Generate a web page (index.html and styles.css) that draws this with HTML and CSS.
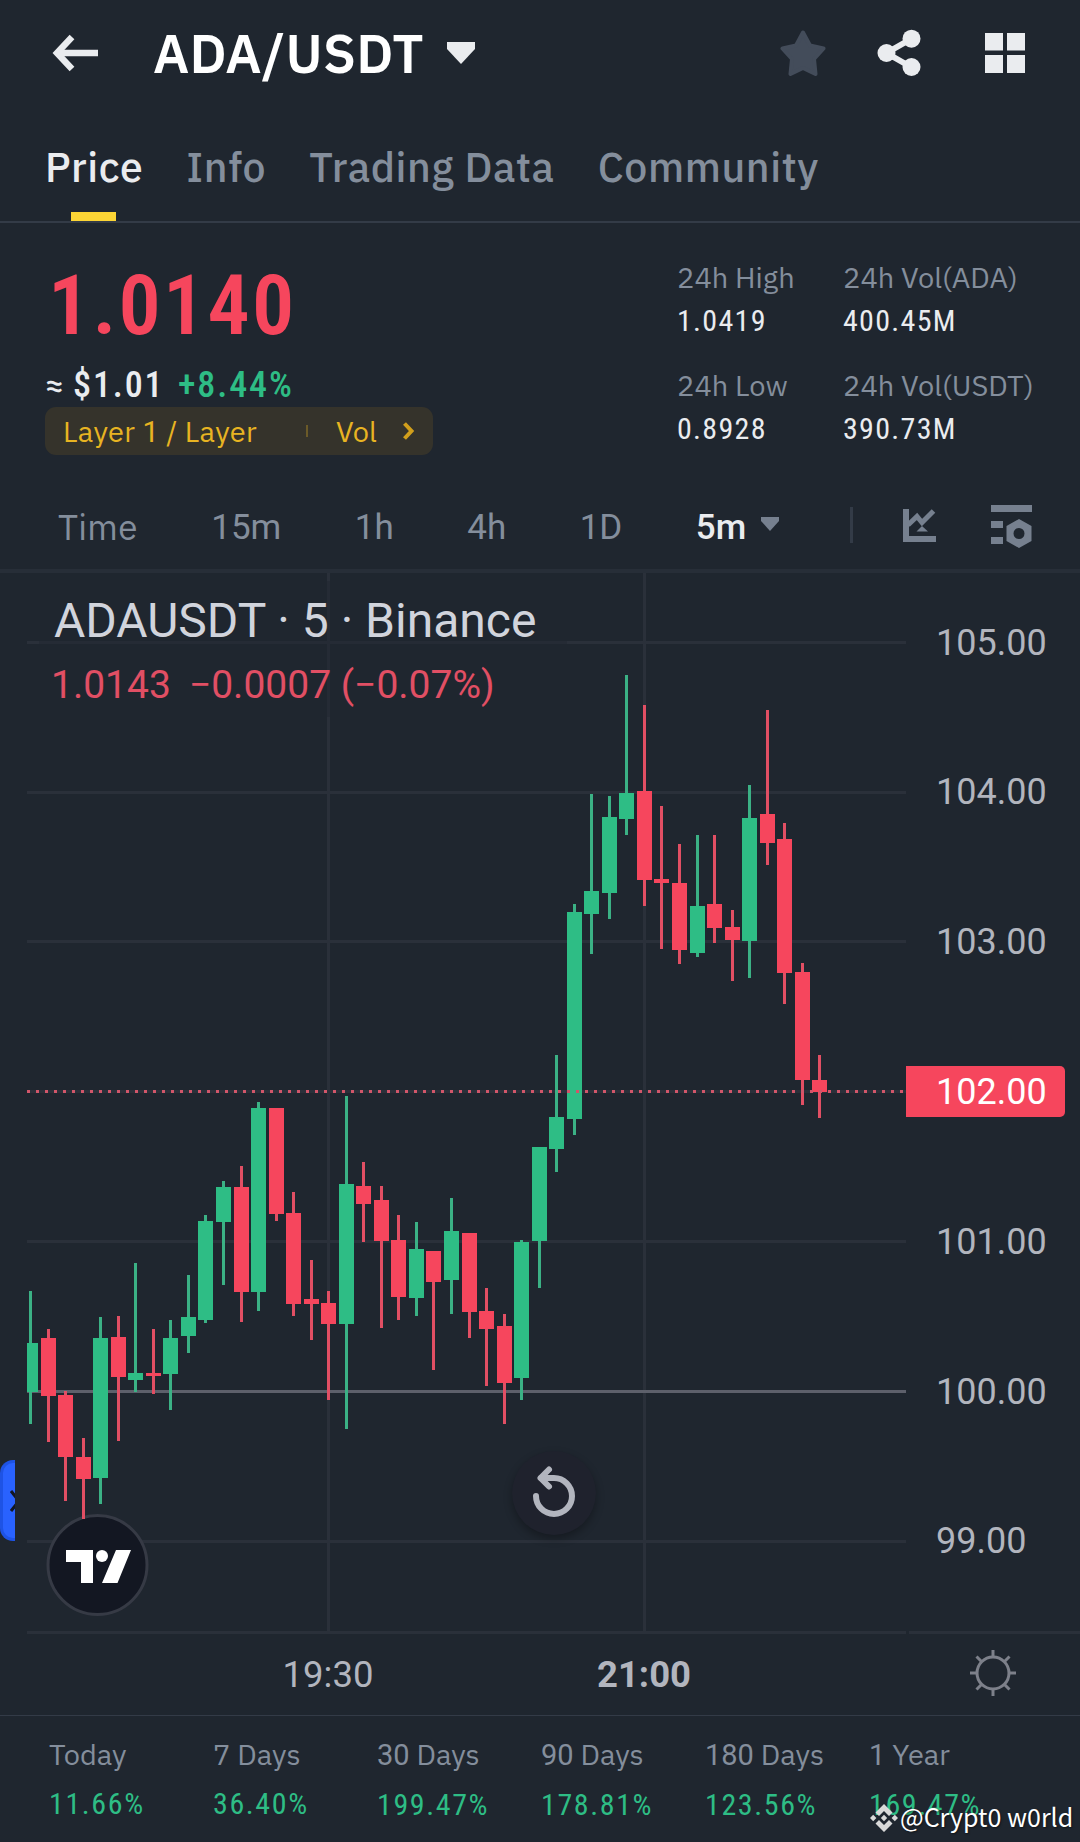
FILE: index.html
```
<!DOCTYPE html>
<html lang="en">

<head>
  <meta charset="UTF-8">
  <meta name="viewport" content="width=device-width, initial-scale=1.0">
  <title>ADA/USDT</title>
  <link rel="stylesheet" href="styles.css">
</head>

<body>
  <header class="header">
    <svg class="icon-back" width="48" height="38" viewBox="0 0 48 38">
      <path d="M20 3 L5 19 L20 35" fill="none" stroke="#eaecef" stroke-width="6.5" />
      <path d="M5 19 H46" stroke="#eaecef" stroke-width="6.5" />
    </svg>
    <h1 class="pair">ADA/USDT</h1>
    <svg class="icon-caret" width="28" height="22" viewBox="0 0 28 22">
      <path d="M0 0 H28 V7 L14 22 L0 7 Z" fill="#eaecef" />
    </svg>
    <div class="header-actions">
      <svg width="46" height="47" viewBox="0 0 46 47">
        <path d="M23 2.500 L30 15.500 L43.500 18.500 L34 29 L35.500 44 L23 38 L10.500 44 L12 29 L2.500 18.500 L16 15.500 Z" fill="#434c5a" stroke="#434c5a" stroke-width="4" stroke-linejoin="round" />
      </svg>
      <svg class="icon-share" width="44" height="48" viewBox="0 0 44 48">
        <path d="M34 10 L9.500 24 L34 38" fill="none" stroke="#eaecef" stroke-width="6" />
        <circle cx="9.500" cy="24" r="9" fill="#eaecef" />
        <circle cx="34.500" cy="9.700" r="9" fill="#eaecef" />
        <circle cx="34.500" cy="38" r="9" fill="#eaecef" />
      </svg>
      <svg width="40" height="40" viewBox="0 0 40 40" fill="#eaecef">
        <rect width="18" height="17.500" />
        <rect x="22" width="18" height="17.500" />
        <rect y="22" width="18" height="18" />
        <rect x="22" y="22" width="18" height="18" />
      </svg>
    </div>
  </header>

  <nav class="tabs">
    <a class="tab active">Price</a>
    <a class="tab">Info</a>
    <a class="tab">Trading Data</a>
    <a class="tab">Community</a>
  </nav>

  <section class="quote">
    <div class="quote-main">
      <div class="last-price">1.0140</div>
      <div class="fiat"><span class="approx">≈</span> <span class="usd">$1.01</span><span class="change">+8.44%</span></div>
      <div class="badge">
        <span class="badge-tag">Layer <span class="digit">1</span> / Layer</span>
        <span class="badge-line"></span>
        <span>Vol</span>
        <svg class="badge-arrow" width="12" height="18" viewBox="0 0 12 18">
          <path d="M1.500 1.500 L8.500 9 L1.500 16.500" fill="none" stroke="#d19f1c" stroke-width="4" />
        </svg>
      </div>
    </div>
    <div class="stats">
      <div class="stats-col">
        <div class="stat-label">24h High</div>
        <div class="stat-value">1.0419</div>
        <div class="stat-label second">24h Low</div>
        <div class="stat-value">0.8928</div>
      </div>
      <div class="stats-col">
        <div class="stat-label">24h Vol(ADA)</div>
        <div class="stat-value">400.45M</div>
        <div class="stat-label second">24h Vol(USDT)</div>
        <div class="stat-value">390.73M</div>
      </div>
    </div>
  </section>

  <div class="intervals">
    <span class="interval time">Time</span>
    <span class="interval">15m</span>
    <span class="interval">1h</span>
    <span class="interval">4h</span>
    <span class="interval">1D</span>
    <span class="interval active">5m
      <svg width="18" height="14" viewBox="0 0 18 14">
        <path d="M0 0 H18 V4 L9 14 L0 4 Z" fill="#76808f" />
      </svg>
    </span>
    <span class="interval-line"></span>
    <svg class="icon-chart" width="34" height="34" viewBox="0 0 34 34">
      <path d="M3 0 V30 H33" fill="none" stroke="#76808f" stroke-width="6" />
      <path d="M5 16 L14 7.500 L19 13.500 L30.500 2" fill="none" stroke="#76808f" stroke-width="5" />
      <path d="M19 17 L25 22.500 H13.500 Z" fill="#76808f" />
    </svg>
    <svg class="icon-settings" width="41" height="43" viewBox="0 0 41 43" fill="#76808f">
      <rect width="41" height="7" />
      <rect y="16" width="12" height="7" />
      <rect y="32" width="12" height="7" />
      <path fill-rule="evenodd" d="M28 14 L40.500 21 V36 L28 43 L15.500 36 V21 Z M28 23 A5.500 5.500 0 1 0 28 34 A5.500 5.500 0 1 0 28 23 Z" />
    </svg>
  </div>

  <section class="chart">
    <div class="plot">
      <svg id="candles" width="906" height="1062" viewBox="0 573 906 1062" shape-rendering="crispEdges"></svg>
      <div class="legend">
        <div class="legend-title">ADAUSDT · 5 · Binance</div>
        <div class="legend-values"><span>1.0143</span><span>−0.0007 (−0.07%)</span></div>
      </div>
      <div class="drawer-handle">
        <svg width="15" height="24" viewBox="0 0 15 24">
          <path d="M8 2 L16 12 L8 22" fill="none" stroke="#131722" stroke-width="3" />
        </svg>
      </div>
      <div class="reset">
        <svg width="48" height="56" viewBox="0 0 48 56" fill="none" stroke="#b2b5be" stroke-width="6" stroke-linecap="round" stroke-linejoin="round">
          <path d="M6 33 A18 18 0 1 0 24 15 H11" />
          <path d="M19 6.500 L10.500 15 L19 23.500" />
        </svg>
      </div>
    </div>
    <div class="price-axis">
      <div class="price-label">105.00</div>
      <div class="price-label">104.00</div>
      <div class="price-label">103.00</div>
      <div class="price-label"><span class="price-tag">102.00</span></div>
      <div class="price-label">101.00</div>
      <div class="price-label">100.00</div>
      <div class="price-label">99.00</div>
    </div>
  </section>

  <div class="time-axis">
    <span class="time-label">19:30</span>
    <span class="time-label major">21:00</span>
    <svg class="icon-sun" width="46" height="46" viewBox="-23 -23 46 46" fill="none" stroke="#7d808a" stroke-width="3">
      <circle r="16" />
      <path d="M0 -23 V-16 M0 16 V23 M-23 0 H-16 M16 0 H23 M-16.500 -16.500 L-11 -11 M11 11 L16.500 16.500 M-16.500 16.500 L-11 11 M11 -11 L16.500 -16.500" />
    </svg>
  </div>

  <footer class="performance">
    <div class="period">
      <div class="period-label">Today</div>
      <div class="period-value">11.66%</div>
    </div>
    <div class="period">
      <div class="period-label">7 Days</div>
      <div class="period-value">36.40%</div>
    </div>
    <div class="period">
      <div class="period-label"><span class="digit">30</span> Days</div>
      <div class="period-value">199.47%</div>
    </div>
    <div class="period">
      <div class="period-label"><span class="digit">90</span> Days</div>
      <div class="period-value">178.81%</div>
    </div>
    <div class="period">
      <div class="period-label"><span class="digit">180</span> Days</div>
      <div class="period-value">123.56%</div>
    </div>
    <div class="period">
      <div class="period-label"><span class="digit">1</span> Year</div>
      <div class="period-value">169.47%</div>
    </div>
    <div class="watermark">
      <svg width="28" height="28" viewBox="0 0 28 28" fill="#d9d9d9">
        <path d="M14 0 L22.500 8.500 L19 12 L14 7 L9 12 L5.500 8.500 Z" />
        <path d="M14 28 L22.500 19.500 L19 16 L14 21 L9 16 L5.500 19.500 Z" />
        <path d="M14 10.800 L17.200 14 L14 17.200 L10.800 14 Z" />
        <path d="M3.200 10.800 L6.400 14 L3.200 17.200 L0 14 Z" />
        <path d="M24.800 10.800 L28 14 L24.800 17.200 L21.600 14 Z" />
      </svg>
      <span class="watermark-name">@Crypt0 w0rld</span>
    </div>
  </footer>

  <script>
    // center x, high, body top, body bottom, low, up
    const candles = [
      [30.5, 1291, 1343, 1392, 1424, 1],
      [48.5, 1329, 1338, 1396, 1442, 0],
      [65.5, 1391, 1395, 1457, 1501, 0],
      [83.5, 1438, 1457, 1479, 1519, 0],
      [100.5, 1317, 1338, 1478, 1504, 1],
      [118.5, 1316, 1337, 1377, 1441, 0],
      [135.5, 1263, 1373, 1380, 1392, 1],
      [153.5, 1329, 1373, 1376, 1394, 0],
      [170.5, 1320, 1338, 1374, 1410, 1],
      [188.5, 1275, 1317, 1336, 1353, 1],
      [205.5, 1215, 1221, 1320, 1323, 1],
      [223.5, 1181, 1187, 1222, 1285, 1],
      [241.5, 1166, 1187, 1292, 1322, 0],
      [258.5, 1102, 1108, 1292, 1311, 1],
      [276.5, 1108, 1108, 1214, 1221, 0],
      [293.5, 1192, 1213, 1304, 1316, 0],
      [311.5, 1260, 1299, 1304, 1340, 0],
      [328.5, 1291, 1303, 1324, 1400, 0],
      [346.5, 1096, 1184, 1324, 1429, 1],
      [363.5, 1162, 1186, 1204, 1242, 0],
      [381.5, 1186, 1200, 1241, 1328, 0],
      [398.5, 1215, 1240, 1297, 1320, 0],
      [416.5, 1222, 1249, 1298, 1316, 1],
      [433.5, 1251, 1251, 1282, 1370, 0],
      [451.5, 1198, 1231, 1280, 1314, 1],
      [469.5, 1233, 1233, 1312, 1338, 0],
      [486.5, 1288, 1311, 1329, 1386, 0],
      [504.5, 1314, 1326, 1383, 1424, 0],
      [521.5, 1240, 1242, 1378, 1400, 1],
      [539.5, 1147, 1147, 1241, 1288, 1],
      [556.5, 1055, 1117, 1149, 1172, 1],
      [574.5, 904, 912, 1119, 1135, 1],
      [591.5, 794, 891, 914, 954, 1],
      [609.5, 796, 817, 893, 919, 1],
      [626.5, 675, 793, 819, 835, 1],
      [644.5, 705, 791, 880, 906, 0],
      [661.5, 806, 879, 883, 949, 0],
      [679.5, 844, 883, 950, 964, 0],
      [697.5, 835, 906, 953, 957, 1],
      [714.5, 835, 904, 928, 943, 0],
      [732.5, 910, 927, 940, 981, 0],
      [749.5, 785, 818, 941, 978, 1],
      [767.5, 710, 814, 843, 865, 0],
      [784.5, 823, 839, 973, 1004, 0],
      [802.5, 963, 972, 1080, 1105, 0],
      [819.5, 1055, 1080, 1092, 1118, 0]
    ];

    const line = (x1, y1, x2, y2, cls) => `<line class="${cls}" x1="${x1}" y1="${y1}" x2="${x2}" y2="${y2}"/>`;
    let svg = '';

    // grid
    for (const x of [328.5, 644.5]) svg += line(x, 573, x, 1631, 'grid');
    for (const y of [642.5, 792.5, 941.5, 1091.5, 1241.5, 1541.5]) svg += line(27, y, 906, y, 'grid');
    svg += line(27, 1391.5, 906, 1391.5, 'base');
    svg += line(27, 1632.5, 906, 1632.5, 'grid');

    // TradingView logo
    svg += `<g shape-rendering="auto">
      <circle cx="97.5" cy="1565" r="49.500" fill="#131722" stroke="#363a45" stroke-width="3"/>
      <path d="M66 1550 H93 V1583 H81 V1562 H66 Z M116 1550 H131 L117.500 1583 H102 Z" fill="#fff"/>
      <circle cx="102" cy="1556" r="6" fill="#fff"/>
    </g>`;

    for (const [x, high, top, bottom, low, up] of candles) {
      const cls = up ? 'up' : 'down';
      const left = Math.max(27, x - 7.5);
      svg += `<rect class="wick ${cls}" x="${x - 1.5}" y="${high}" width="3" height="${low - high}"/>`;
      svg += `<rect class="${cls}" x="${left}" y="${top}" width="${x + 7.5 - left}" height="${bottom - top}"/>`;
    }

    svg += line(27, 1091.5, 906, 1091.5, 'last');
    document.getElementById('candles').innerHTML = svg;
  </script>
</body>

</html>
```
FILE: styles.css
```
* {
  box-sizing: border-box;
}

body {
  margin: 0;
  width: 1080px;
  height: 1842px;
  overflow: hidden;
  background: #1f262f;
  color: #eaecef;
  font-family: "IBM Plex Sans", "Noto Sans", sans-serif;
}

svg {
  display: block;
  flex-shrink: 0;
}

.digit {
  font-family: Roboto, sans-serif;
}

/* header */
.header {
  display: flex;
  align-items: center;
  height: 106px;
  padding: 0 55px 0 52px;
}

.pair {
  margin: 0 0 0 53px;
  font-size: 54px;
  line-height: 54px;
  font-weight: 600;
  letter-spacing: 0.2px;
  color: #fff;
}

.icon-caret {
  margin-left: 23px;
}

.header-actions {
  display: flex;
  align-items: center;
  margin-left: auto;
}

.icon-share {
  margin: 0 64px 0 51px;
}

/* tabs */
.tabs {
  display: flex;
  gap: 43px;
  height: 117px;
  padding: 40px 0 0 45px;
  border-bottom: 2px solid #333b47;
}

.tab {
  height: 75px;
  font-size: 41px;
  line-height: 41px;
  font-weight: 500;
  letter-spacing: 0.6px;
  color: #848e9c;
}

.tab.active {
  color: #eaecef;
}

.tab.active::after {
  content: "";
  display: block;
  width: 45px;
  height: 9px;
  margin: 25px 0 0 26px;
  background: #fcd535;
}

/* quote */
.quote {
  display: flex;
  height: 264px;
  padding: 34px 0 0 45px;
}

.quote-main {
  width: 632px;
  padding-top: 6px;
}

.last-price {
  margin-left: 3px;
  font-family: "Roboto Condensed", Roboto, sans-serif;
  font-size: 84px;
  line-height: 85px;
  font-weight: 600;
  letter-spacing: 2.2px;
  color: #f6465d;
}

.fiat {
  display: flex;
  margin-top: 15px;
  font-family: "Roboto Condensed", Roboto, sans-serif;
  font-size: 36px;
  line-height: 44px;
  font-weight: 500;
  letter-spacing: 1.9px;
}

.approx {
  width: 28px;
  font-family: "IBM Plex Sans", Roboto, sans-serif;
  font-size: 31px;
  letter-spacing: 0;
}

.usd {
  width: 105px;
}

.change {
  color: #2ebd85;
}

.badge {
  display: flex;
  align-items: center;
  width: 388px;
  height: 48px;
  padding-left: 18px;
  border-radius: 11px;
  background: #35332b;
  color: #e8b422;
  font-size: 29px;
  line-height: 46px;
}

.badge-tag {
  width: 243px;
  letter-spacing: 0.3px;
}

.badge-line {
  width: 2px;
  height: 12px;
  margin-right: 28px;
  background: #6b5a28;
}

.badge-arrow {
  margin-left: 26px;
}

.stats {
  display: flex;
  margin-top: -1px;
}

.stats-col {
  width: 166px;
  white-space: nowrap;
}

.stat-label {
  font-size: 29px;
  line-height: 43px;
  color: #848e9c;
}

.stat-label.second {
  margin-top: 22px;
}

.stat-value {
  font-family: "Roboto Condensed", Roboto, sans-serif;
  font-size: 30px;
  line-height: 43px;
  font-weight: 400;
  letter-spacing: 1.3px;
}

/* intervals */
.intervals {
  display: flex;
  align-items: center;
  height: 82px;
  padding: 0 0 2px 58px;
}

.interval {
  font-family: Roboto, sans-serif;
  font-size: 35px;
  line-height: 35px;
  color: #848e9c;
  font-weight: 400;
  margin-right: 73.5px;
}

.interval.time {
  font-family: "IBM Plex Sans", Roboto, sans-serif;
  letter-spacing: 0.3px;
}

.interval.active {
  display: flex;
  gap: 15px;
  margin-right: 71px;
  font-weight: 500;
  color: #eaecef;
}

.interval.active svg {
  margin-top: 7px;
}

.interval-line {
  width: 3px;
  height: 36px;
  margin-top: -4px;
  background: #333b47;
}

.icon-chart {
  margin: -3px 0 0 50px;
}

.icon-settings {
  margin: -2px 0 0 54px;
}

/* chart */
.chart {
  display: flex;
  height: 1065px;
  border-top: 4px solid #272e38;
  font-family: Roboto, sans-serif;
}

.plot {
  position: relative;
  width: 909px;
}

.grid {
  stroke: #2a303a;
  stroke-width: 3;
}

.base {
  stroke: #5d606b;
  stroke-width: 3;
}

.last {
  stroke: #d1566a;
  stroke-width: 3;
  stroke-dasharray: 3 6;
}

.up {
  fill: #2ebd85;
}

.down {
  fill: #f6465d;
}

.wick.up {
  fill: #3bb185;
}

.wick.down {
  fill: #e14f64;
}

.legend {
  position: absolute;
  left: 39px;
  top: 8px;
  width: 528px;
  height: 136px;
  padding: 10px 0 0 15px;
  background: rgba(31, 38, 47, 0.5);
}

.legend-title {
  font-size: 48px;
  line-height: 60px;
  white-space: nowrap;
  color: #d1d4dc;
}

.legend-values {
  display: flex;
  gap: 18px;
  margin: 6px 0 0 -3px;
  font-size: 39px;
  line-height: 56px;
  white-space: nowrap;
  color: #e14f64;
}

.drawer-handle {
  position: absolute;
  left: 0;
  top: 887px;
  width: 15px;
  height: 81px;
  padding-top: 26px;
  border: 3px solid #1e53e5;
  border-right: 0;
  border-radius: 13px 0 0 13px;
  background: #2962ff;
  overflow: hidden;
}

.reset {
  position: absolute;
  left: 512px;
  top: 878px;
  width: 84px;
  height: 84px;
  padding: 12px 0 0 18px;
  border-radius: 50%;
  background: #1f222d;
  box-shadow: 0 4px 8px rgba(0, 0, 0, 0.3);
}

.price-axis {
  display: flex;
  flex-direction: column;
  width: 171px;
  border-bottom: 3px solid #2a303a;
}

.price-label {
  display: flex;
  align-items: center;
  flex-shrink: 0;
  height: 149.9px;
  padding-left: 27px;
  font-size: 36px;
  color: #b2b5be;
}

.price-label:first-child {
  height: 144px;
  padding-bottom: 4px;
}

.price-tag {
  width: 159px;
  height: 51px;
  margin-left: -30px;
  padding-left: 30px;
  line-height: 53px;
  border-radius: 0 5px 5px 0;
  background: #f6465d;
  color: #fff;
}

.time-axis {
  display: flex;
  align-items: center;
  height: 82px;
  padding-left: 170px;
  border-bottom: 1px solid #333b47;
  font-family: Roboto, sans-serif;
}

.time-label {
  width: 316px;
  text-align: center;
  font-size: 36.5px;
  color: #b2b5be;
}

.time-label.major {
  font-weight: 700;
}

.icon-sun {
  margin: -3px 0 0 168px;
}

/* performance */
.performance {
  position: relative;
  display: flex;
  padding: 14px 0 0 49px;
}

.period {
  width: 164px;
}

.period-label {
  font-size: 29px;
  line-height: 49px;
  color: #848e9c;
}

.period-value {
  font-family: "Roboto Condensed", Roboto, sans-serif;
  font-size: 30px;
  line-height: 49px;
  letter-spacing: 1.6px;
  color: #2ebd85;
}

.watermark {
  position: absolute;
  left: 870px;
  top: 86px;
  display: flex;
  align-items: center;
  gap: 2px;
  font-family: "Noto Sans CJK SC", "Noto Sans", sans-serif;
  font-size: 25px;
  line-height: 36px;
  white-space: nowrap;
  color: #fff;
  text-shadow: 1px 1px 2px rgba(0, 0, 0, 0.5);
}

.watermark-name {
  margin-top: -4px;
}
```
